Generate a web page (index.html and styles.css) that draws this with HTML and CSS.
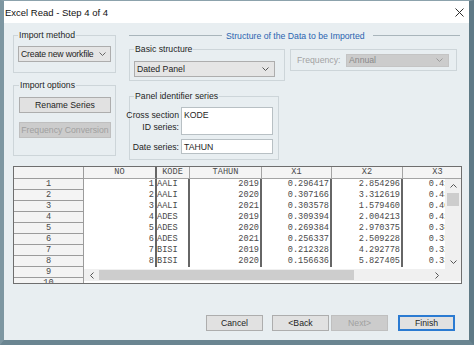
FILE: index.html
```html
<!DOCTYPE html>
<html lang="en">
  <head>
    <meta charset="UTF-8" />
    <title>Excel Read - Step 4 of 4</title>
    <link rel="stylesheet" href="styles.css">
  </head>

  <body>
    <div class="window">
      <div class="titlebar">
        <span>Excel Read - Step 4 of 4</span>
        <svg class="close" width="9" height="9" viewBox="0 0 9 9"><path d="M0.5 0.5L8.5 8.5M8.5 0.5L0.5 8.5" stroke="#2b2b2b" stroke-width="1" fill="none"/></svg>
      </div>

      <div class="content">
        <div class="top">
          <div class="left">
            <fieldset class="group method">
              <legend>Import method</legend>
              <div class="select tight">
                <span>Create new workfile</span>
                <svg width="7" height="4" viewBox="0 0 7 4"><path d="M0.5 0.5L3.5 3.5L6.5 0.5" stroke="#666" fill="none"/></svg>
              </div>
            </fieldset>

            <fieldset class="group options">
              <legend>Import options</legend>
              <div class="btn">Rename Series</div>
              <div class="btn disabled">Frequency Conversion</div>
            </fieldset>
          </div>

          <div class="right">
            <div class="section-head">Structure of the Data to be Imported</div>

            <div class="struct-row">
              <fieldset class="group basic">
                <legend>Basic structure</legend>
                <div class="select">
                  <span>Dated Panel</span>
                  <svg width="7" height="4" viewBox="0 0 7 4"><path d="M0.5 0.5L3.5 3.5L6.5 0.5" stroke="#555" fill="none"/></svg>
                </div>
              </fieldset>
              <div class="freq">
                <span class="muted">Frequency:</span>
                <div class="select off">
                  <span>Annual</span>
                  <svg width="7" height="4" viewBox="0 0 7 4"><path d="M0.5 0.5L3.5 3.5L6.5 0.5" stroke="#9a9a9a" fill="none"/></svg>
                </div>
              </div>
            </div>

            <fieldset class="group panel">
              <legend>Panel identifier series</legend>
              <div class="panel-grid">
                <label>Cross section<br>ID series:</label>
                <div class="input tall">KODE</div>
                <label>Date series:</label>
                <div class="input">TAHUN</div>
              </div>
            </fieldset>
          </div>
        </div>

        <div class="sheet">
          <div class="rowheads">
            <div class="rh corner"></div>
            <div class="rh">1</div>
            <div class="rh">2</div>
            <div class="rh">3</div>
            <div class="rh">4</div>
            <div class="rh">5</div>
            <div class="rh">6</div>
            <div class="rh">7</div>
            <div class="rh">8</div>
            <div class="rh">9</div>
            <div class="rh">10</div>
          </div>

          <div class="pane">
            <div class="row head">
              <div class="c no strong">NO</div>
              <div class="c kode">KODE</div>
              <div class="c tahun">TAHUN</div>
              <div class="c x">X1</div>
              <div class="c x2">X2</div>
              <div class="c x">X3</div>
            </div>

            <div class="body">
              <div class="rows">
                <div class="row"><div class="c no">1</div><div class="c kode">AALI</div><div class="c tahun">2019</div><div class="c x">0.296417</div><div class="c x2">2.854296</div><div class="c x">0.412850</div></div>
                <div class="row"><div class="c no">2</div><div class="c kode">AALI</div><div class="c tahun">2020</div><div class="c x">0.307166</div><div class="c x2">3.312619</div><div class="c x">0.438212</div></div>
                <div class="row"><div class="c no">3</div><div class="c kode">AALI</div><div class="c tahun">2021</div><div class="c x">0.303578</div><div class="c x2">1.579460</div><div class="c x">0.401127</div></div>
                <div class="row"><div class="c no">4</div><div class="c kode">ADES</div><div class="c tahun">2019</div><div class="c x">0.309394</div><div class="c x2">2.004213</div><div class="c x">0.421905</div></div>
                <div class="row"><div class="c no">5</div><div class="c kode">ADES</div><div class="c tahun">2020</div><div class="c x">0.269384</div><div class="c x2">2.970375</div><div class="c x">0.387214</div></div>
                <div class="row"><div class="c no">6</div><div class="c kode">ADES</div><div class="c tahun">2021</div><div class="c x">0.256337</div><div class="c x2">2.509228</div><div class="c x">0.356190</div></div>
                <div class="row"><div class="c no">7</div><div class="c kode">BISI</div><div class="c tahun">2019</div><div class="c x">0.212328</div><div class="c x2">4.292778</div><div class="c x">0.321466</div></div>
                <div class="row"><div class="c no">8</div><div class="c kode">BISI</div><div class="c tahun">2020</div><div class="c x">0.156636</div><div class="c x2">5.827405</div><div class="c x">0.334518</div></div>
              </div>
              <div class="vscroll">
                <div class="arrow"><svg width="7" height="4" viewBox="0 0 7 4"><path d="M0.5 3.5L3.5 0.5L6.5 3.5" stroke="#555" fill="none"/></svg></div>
                <div class="vthumb"></div>
                <div class="arrow"><svg width="7" height="4" viewBox="0 0 7 4"><path d="M0.5 0.5L3.5 3.5L6.5 0.5" stroke="#555" fill="none"/></svg></div>
              </div>
            </div>

            <div class="hscroll">
              <div class="harrow"><svg width="4" height="7" viewBox="0 0 4 7"><path d="M3.5 0.5L0.5 3.5L3.5 6.5" stroke="#555" fill="none"/></svg></div>
              <div class="hthumb"></div>
              <div class="harrow end"><svg width="4" height="7" viewBox="0 0 4 7"><path d="M0.5 0.5L3.5 3.5L0.5 6.5" stroke="#555" fill="none"/></svg></div>
              <div class="hcorner"></div>
            </div>
          </div>
        </div>

        <div class="actions">
          <div class="btn wide">Cancel</div>
          <div class="btn wide back">&lt;Back</div>
          <div class="btn wide disabled next">Next&gt;</div>
          <div class="btn wide primary">Finish</div>
        </div>
      </div>
    </div>
  </body>
</html>
```

FILE: styles.css
```css
* {
  box-sizing: border-box;
}

body {
  margin: 0;
  font-family: "Liberation Sans", Arial, sans-serif;
  font-size: 8.7px;
  color: #1e1e1e;
}

.window {
  width: 474px;
  height: 345px;
  background: #e8eef1;
  border-style: solid;
  border-color: #8ca2ac #5f7a86 #6a8591 #7d96a1;
  border-width: 1px 5px 5px 4px;
  display: flex;
  flex-direction: column;
}

.titlebar {
  height: 22px;
  background: #fff;
  display: flex;
  align-items: center;
  justify-content: space-between;
  padding: 0 5px 0 1px;
  font-size: 9.5px;
  color: #111;
}

.content {
  flex: 1;
  padding: 7px 7px 0 9px;
  display: flex;
  flex-direction: column;
}

.top {
  display: flex;
}

.left {
  width: 103px;
  flex: none;
}

.right {
  width: 331px;
  margin-left: 13px;
}

/* group boxes */
.group {
  margin: 0;
  min-width: 0;
  border: 1px solid #cdd5d9;
}

.group legend {
  padding: 0 1px;
  line-height: 11px;
}

.method {
  padding: 5px 4px 10px 4px;
}

.options {
  margin-top: 7px;
  padding: 6px 4px 17px 5px;
}

.options .btn + .btn {
  margin-top: 9px;
}

.basic {
  width: 156px;
  padding: 6px 9px 3px 4px;
}

.panel {
  width: 150px;
  margin-top: 10px;
  padding: 5px 5px 5px 0;
}

.panel legend {
  margin-left: 4px;
}

/* controls */
.select {
  height: 16px;
  background: #e5e5e5;
  border: 1px solid #adadad;
  display: flex;
  align-items: center;
  justify-content: space-between;
  padding: 0 5px 0 2px;
  white-space: nowrap;
}

.select.tight {
  letter-spacing: -0.2px;
  padding-right: 4px;
}

.select.off {
  width: 103px;
  height: 13px;
  background: #cccccc;
  border-color: #c4c4c4;
  color: #8a8a8a;
}

.btn {
  height: 16px;
  background: #e1e1e1;
  border: 1px solid #adadad;
  display: flex;
  align-items: center;
  justify-content: center;
  white-space: nowrap;
}

.btn.disabled {
  background: #cccccc;
  border-color: #bfbfbf;
  color: #a0a0a0;
}

.muted {
  color: #a3a3a3;
}

.section-head {
  display: flex;
  align-items: center;
  height: 11px;
  color: #2a64b0;
  white-space: nowrap;
}

.section-head::before,
.section-head::after {
  content: "";
  height: 1px;
  background: #a9b5bb;
}

.section-head::before {
  width: 93px;
  margin-right: 4px;
}

.section-head::after {
  flex: 1;
  margin-left: 8px;
}

.struct-row {
  display: flex;
  align-items: flex-start;
  margin-top: 3px;
}

.freq {
  width: 167px;
  height: 22px;
  margin: 5px 0 0 5px;
  border: 1px solid #cdd5d9;
  display: flex;
  align-items: center;
  justify-content: space-between;
  padding: 0 7px 0 6px;
}

.panel-grid {
  display: grid;
  grid-template-columns: 49px 92px;
  grid-template-rows: 28px 15px;
  column-gap: 2px;
  row-gap: 4px;
  align-items: center;
}

.panel-grid label {
  text-align: right;
  line-height: 12px;
  white-space: nowrap;
  margin-left: -4px;
}

.input {
  height: 100%;
  background: #fff;
  border: 1px solid #b8c0c4;
  padding: 1px 2px;
  line-height: 12px;
}

/* spreadsheet */
.sheet {
  margin-top: 6px;
  height: 118px;
  width: 449px;
  border: 1px solid #6e6e6e;
  background: #fff;
  display: flex;
  overflow: hidden;
  font-family: "Liberation Mono", "Courier New", monospace;
  font-size: 8.6px;
  color: #4a4a4a;
}

.rowheads {
  width: 70px;
  flex: none;
}

.rh {
  height: 11px;
  line-height: 10px;
  text-align: center;
  background: #f4f4f4;
  border-right: 1px solid #9c9c9c;
  border-bottom: 1px solid #9c9c9c;
}

.rh.corner {
  height: 12px;
}

.pane {
  flex: 1;
  min-width: 0;
  display: flex;
  flex-direction: column;
  overflow: hidden;
}

.row {
  display: flex;
  height: 11px;
  line-height: 11px;
  white-space: nowrap;
}

.row.head {
  height: 12px;
  background: #f4f4f4;
  text-align: center;
}

.c {
  flex: none;
  padding: 0 1px;
  text-align: right;
  border-right: 2px solid #666;
}

.c.no { width: 73px; }
.c.kode { width: 33px; text-align: left; padding-left: 0; }
.c.tahun { width: 72px; }
.c.x { width: 70px; }
.c.x2 { width: 71px; }

.head .c {
  text-align: center;
  border-right: 1px solid #a4a4a4;
  border-bottom: 1px solid #a4a4a4;
}

.head .c.strong {
  border-right: 2px solid #666;
}

.body {
  display: flex;
  height: 90px;
}

.rows {
  flex: 1;
  min-width: 0;
  overflow: hidden;
}

.vscroll {
  width: 16px;
  flex: none;
  background: #f0f0f0;
  display: flex;
  flex-direction: column;
  align-items: center;
}

.arrow {
  height: 14px;
  display: flex;
  align-items: center;
}

.vthumb {
  width: 12px;
  height: 13px;
  background: #cdcdcd;
  margin-bottom: auto;
}

.hscroll {
  height: 12px;
  background: #f0f0f0;
  display: flex;
  align-items: center;
}

.harrow {
  width: 15px;
  display: flex;
  justify-content: center;
}

.hthumb {
  width: 255px;
  height: 10px;
  background: #cdcdcd;
}

.harrow.end {
  margin-left: auto;
  width: 16px;
}

.hcorner {
  width: 16px;
}

/* dialog buttons */
.actions {
  display: flex;
  justify-content: flex-end;
  margin-top: 31px;
  padding-right: 7px;
}

.btn.wide {
  width: 57px;
  margin-left: 10px;
}

.btn.back {
  margin-left: 9px;
}

.btn.next {
  margin-left: 2px;
}

.btn.primary {
  border-color: #2b7bd2;
  box-shadow: inset 0 0 0 1px #2b7bd2;
}
```
